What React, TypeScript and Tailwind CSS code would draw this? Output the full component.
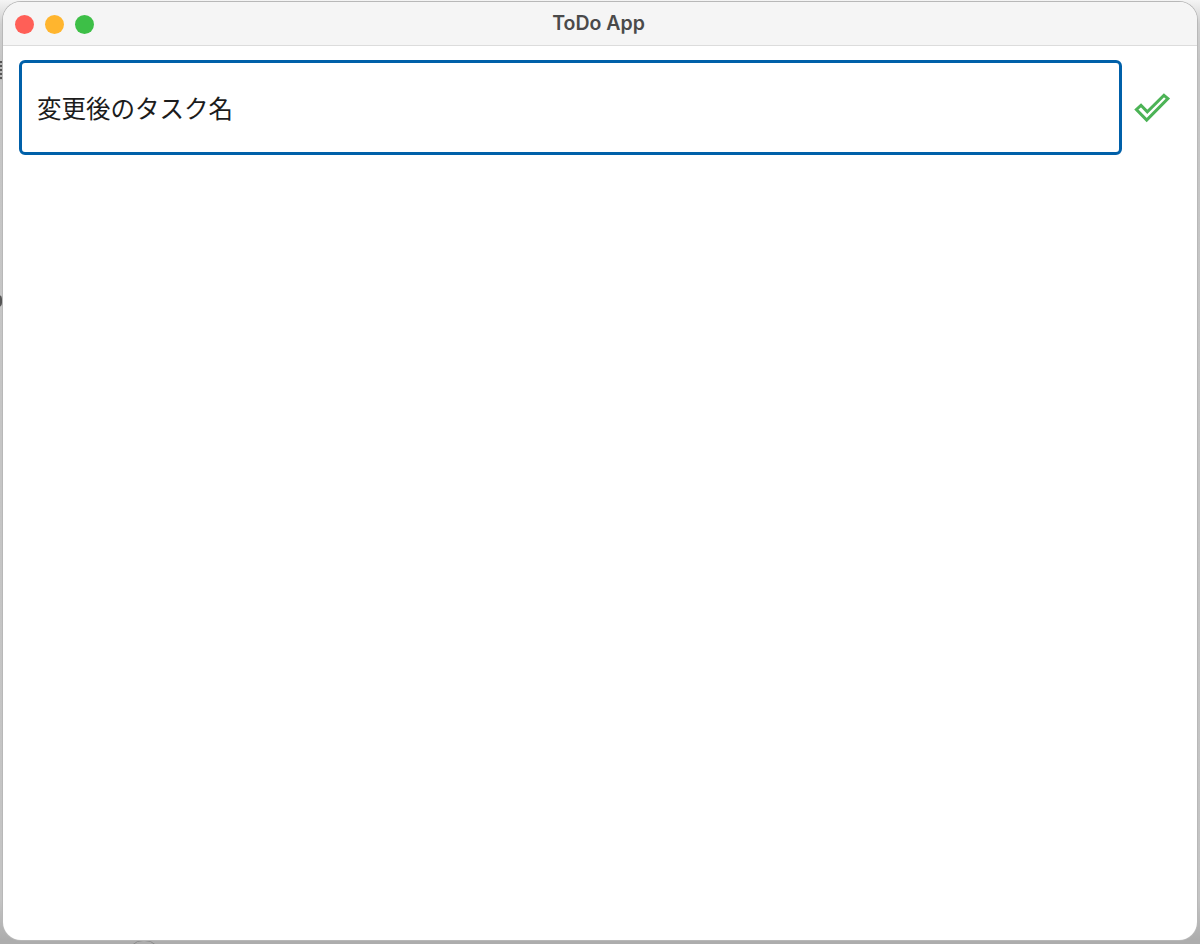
const App = () => {
  return (
    <div className="relative flex h-[944px] w-[1200px] overflow-hidden bg-[linear-gradient(to_bottom,#f4f4f4_0px,#d0d0d0_24px,#c6c6c6_60px,#c4c4c4_900px,#adadad_940px)] pt-[2px] pr-[3px] pb-[4px] pl-[3px] font-['Inter','Noto_Sans_CJK_JP',sans-serif]">
      {/* Bits of the window behind, only their edges show */}
      <span className="absolute top-[61px] left-0 h-[19px] w-[3px] bg-[repeating-linear-gradient(to_bottom,#555_0px,#555_2px,#b8b8b8_2px,#b8b8b8_4px)]" />
      <span className="absolute top-[295px] left-[-6px] h-[12px] w-[8px] rounded-full border-2 border-[#555]" />
      <span className="absolute top-[940px] left-[128px] h-[30px] w-[32px] rounded-full border border-[#8c8c8c]" />

      <div className="relative flex w-full flex-col overflow-hidden rounded-[18px] bg-white shadow-[0_0_0_1px_#b8b8b8]">
        {/* Title bar */}
        <div className="relative flex h-[44px] shrink-0 items-center justify-center border-b border-[#dcdcdc] bg-[#f5f5f5] pr-[3px]">
          <div className="absolute top-[13px] left-[12px] flex gap-[11px]">
            <span className="h-[19px] w-[19px] rounded-full bg-[#ff5f57]" />
            <span className="h-[19px] w-[19px] rounded-full bg-[#ffb52e]" />
            <span className="h-[19px] w-[19px] rounded-full bg-[#3dbf47]" />
          </div>
          <span className="text-[19.5px] font-semibold text-[#4a4a4a]">ToDo App</span>
        </div>

        {/* Edit row */}
        <div className="flex items-center pt-[14px] pr-[25px] pl-[16px]">
          <div className="flex h-[95px] flex-1 items-center rounded-[6px] border-[3px] border-[#0060a9] pt-[3px] pl-[15px] text-[24.5px] text-[#1c1c1c]">
            変更後のタスク名
          </div>
          <svg className="ml-[10px] h-[40px] w-[40px]" viewBox="0 0 40 40" fill="none">
            <path
              d="M32 7.3 35.9 10.5 14.7 32.1 4.4 21.5 9 17.3 15.3 23.9Z"
              stroke="#4cb356"
              strokeWidth="3"
              strokeLinejoin="miter"
            />
          </svg>
        </div>
      </div>
    </div>
  );
};

export default App;
